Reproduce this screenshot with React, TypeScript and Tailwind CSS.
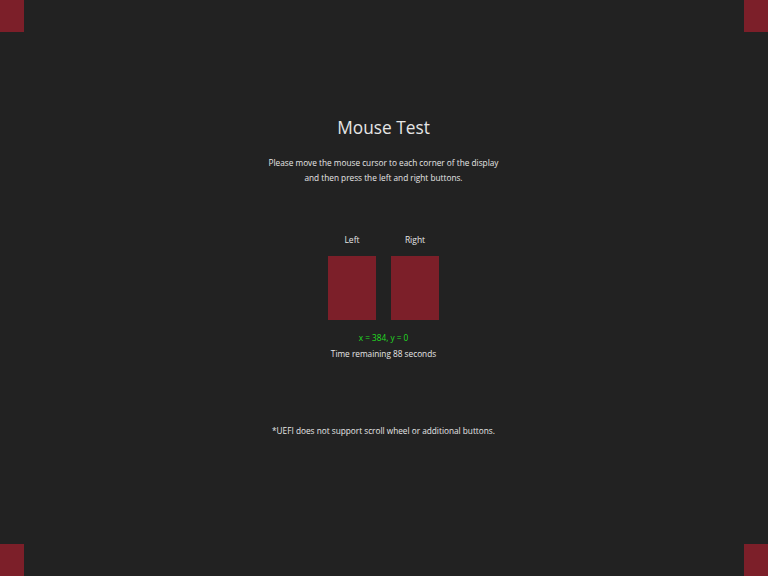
const Corner = () => <div className="w-[24px] h-[32px] bg-[#7c1f29]" />;

const ButtonBox = ({ label }: { label: string }) => (
  <div className="flex flex-col items-center w-[48px]">
    <span className="text-[8.5px] leading-[14px] whitespace-nowrap">{label}</span>
    <div className="mt-[9px] w-[48px] h-[64px] bg-[#7c1f29]" />
  </div>
);

const App = () => {
  return (
    <div
      className="w-[768px] h-[576px] bg-[#222222] text-[#e6e6e6] flex flex-col overflow-hidden"
      style={{ fontFamily: '"Open Sans", "Noto Sans", sans-serif' }}
    >
      <div className="flex justify-between">
        <Corner />
        <Corner />
      </div>
      <div className="flex-1 flex flex-col items-center pr-[1px]">
        <h1 className="mt-[84px] text-[17.3px] leading-[24px]">Mouse Test</h1>
        <p className="mt-[15px] text-[8.25px] leading-[15px] text-center">
          Please move the mouse cursor to each corner of the display
          <br />
          and then press the left and right buttons.
        </p>
        <div className="mt-[48px] flex gap-[15px]">
          <ButtonBox label="Left" />
          <ButtonBox label="Right" />
        </div>
        <p className="mt-[10px] text-[8.25px] leading-[15px] text-[#22dd22]">x = 384, y = 0</p>
        <p className="mt-[1px] text-[8.25px] leading-[15px]">Time remaining 88 seconds</p>
        <p className="mt-[62px] text-[8.25px] leading-[15px]">
          *UEFI does not support scroll wheel or additional buttons.
        </p>
      </div>
      <div className="flex justify-between">
        <Corner />
        <Corner />
      </div>
    </div>
  );
};

export default App;
